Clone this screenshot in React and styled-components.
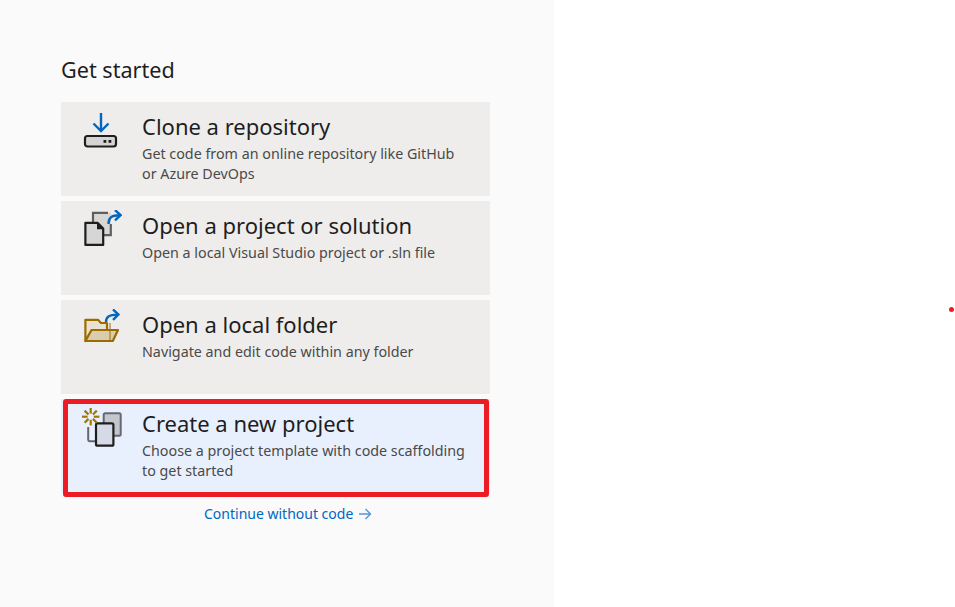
import React from "react";
import styled, { createGlobalStyle } from "styled-components";

const Global = createGlobalStyle`
   html, body {
      margin: 0;
      padding: 0;
      background: #ffffff;
      font-family: "Noto Sans", "Open Sans", sans-serif;
   }
`;

const Page = styled.div`
   position: relative;
   width: 955px;
   height: 607px;
   overflow: hidden;
   background: #ffffff;
`;

const Panel = styled.div`
   width: 554px;
   height: 100%;
   box-sizing: border-box;
   background: #fafafa;
   padding: 54px 64px 0 61px;
`;

const Title = styled.h1`
   margin: 0 0 17px;
   font-size: 21.6px;
   line-height: 31px;
   font-weight: 400;
   color: #1e1e1e;
`;

const List = styled.div`
   display: flex;
   flex-direction: column;
   gap: 5px;
   width: 429px;
`;

const Card = styled.div`
   position: relative;
   display: flex;
   height: 94px;
   box-sizing: border-box;
   padding: 9px 0 0 21px;
   background: ${(p) => (p.$active ? "#e8f0fe" : "#eeedeb")};
`;

/* the hand-drawn red annotation around the last card */
const Marker = styled.div`
   position: absolute;
   inset: 0 1px -4px 2px;
   border: 5px solid #ed1c24;
   border-radius: 3px;
   pointer-events: none;
`;

const IconBox = styled.div`
   flex: none;
   width: 40px;
   height: 40px;
   margin-right: 20px;
   svg {
      display: block;
   }
`;

const Body = styled.div`
   display: flex;
   flex-direction: column;
   margin-top: -1px;
`;

const CardTitle = styled.div`
   font-size: 22px;
   line-height: 32px;
   color: #1e1e1e;
`;

const CardText = styled.div`
   width: 326px;
   margin-top: 2px;
   font-size: 14.3px;
   line-height: 19.5px;
   color: #4a4a4a;
`;

const Continue = styled.a`
   display: flex;
   align-items: center;
   gap: 5px;
   margin-top: 10px;
   padding-left: 143px;
   font-size: 14px;
   line-height: 22px;
   color: #0067c0;
   text-decoration: none;
   cursor: pointer;
`;

const Dot = styled.span`
   position: absolute;
   left: 949px;
   top: 307px;
   width: 5px;
   height: 5px;
   border-radius: 50%;
   background: #ed1c24;
`;

const CloneIcon = () => (
   <svg width="40" height="40" viewBox="0 0 40 40" fill="none">
      <path d="M19 2V20" stroke="#0067c0" strokeWidth="2.4" />
      <path d="M11.5 12.5L19 20L26.5 12.5" stroke="#0067c0" strokeWidth="2.4" />
      <rect x="3" y="25" width="31" height="10.5" rx="2.5" fill="#d4d4d4" stroke="#1e1e1e" strokeWidth="2.2" />
      <rect x="21.5" y="29" width="2.8" height="2.8" fill="#1e1e1e" />
      <rect x="26.5" y="29" width="2.8" height="2.8" fill="#1e1e1e" />
   </svg>
);

const OpenIcon = () => (
   <svg width="40" height="40" viewBox="0 0 40 40" fill="none">
      <rect x="11" y="2.5" width="18" height="23" fill="#bdbdbd" opacity="0.45" />
      <path d="M11 12V2.8H26" stroke="#5f5f5f" strokeWidth="2.2" />
      <path d="M28.8 14V25.2H18" stroke="#5f5f5f" strokeWidth="2.2" />
      <path d="M3.4 12.8H15.5L21.2 18.5V34.9H3.4Z" fill="#d6d6d6" stroke="#1e1e1e" strokeWidth="2.2" strokeLinejoin="round" />
      <path d="M15 12.8H16L21.2 18V19.2H15Z" fill="#1e1e1e" />
      <path d="M26.5 14C26.5 8 29 5.2 38 5.2" stroke="#0067c0" strokeWidth="2.4" />
      <path d="M33 0L38.6 5.2L33 10.4" stroke="#0067c0" strokeWidth="2.4" />
   </svg>
);

const FolderIcon = () => (
   <svg width="40" height="40" viewBox="0 0 40 40" fill="none">
      <path d="M3.4 32V10.8H16L19 14H25V21H10L3.4 32Z" fill="#e9e2d2" stroke="#9c6c00" strokeWidth="2.2" strokeLinejoin="round" />
      <path d="M9.5 21H36L30.8 32H3.4Z" fill="#d9ccb0" stroke="#9c6c00" strokeWidth="2.2" strokeLinejoin="round" />
      <path d="M28 14V32" stroke="#9c6c00" strokeWidth="1.8" opacity="0.55" />
      <path d="M24 13C24 8 26.5 5.6 36 5.6" stroke="#0067c0" strokeWidth="2.4" />
      <path d="M31 0.4L36.4 5.6L31 10.8" stroke="#0067c0" strokeWidth="2.4" />
   </svg>
);

const NewIcon = () => (
   <svg width="40" height="40" viewBox="0 0 40 40" fill="none">
      <rect x="21.7" y="5.3" width="17" height="22.4" rx="1.5" fill="#c3c6cf" stroke="#66686e" strokeWidth="2" />
      <path d="M13 33.2H7.5C6.6 33.2 6.2 32.6 6.2 31.8V19" stroke="#66686e" strokeWidth="2" />
      <rect x="14" y="15.3" width="17.4" height="22.4" rx="1.5" fill="#d6dae6" stroke="#1e1e1e" strokeWidth="2.2" />
      <g stroke="#a07800" strokeWidth="2.2">
         <path d="M8.7 0V5.6" />
         <path d="M8.7 11.8V17.4" />
         <path d="M0 8.7H5.6" />
         <path d="M11.8 8.7H17.4" />
         <path d="M2.6 2.6L6.5 6.5" />
         <path d="M10.9 10.9L14.8 14.8" />
         <path d="M14.8 2.6L10.9 6.5" />
         <path d="M6.5 10.9L2.6 14.8" />
      </g>
   </svg>
);

const cards = [
   {
      title: "Clone a repository",
      text: "Get code from an online repository like GitHub or Azure DevOps",
      icon: <CloneIcon />,
   },
   {
      title: "Open a project or solution",
      text: "Open a local Visual Studio project or .sln file",
      icon: <OpenIcon />,
   },
   {
      title: "Open a local folder",
      text: "Navigate and edit code within any folder",
      icon: <FolderIcon />,
   },
   {
      title: "Create a new project",
      text: "Choose a project template with code scaffolding to get started",
      icon: <NewIcon />,
      active: true,
   },
];

const App = () => {
   return (
      <Page>
         <Global />
         <Panel>
            <Title>Get started</Title>
            <List>
               {cards.map((card) => (
                  <Card key={card.title} $active={card.active}>
                     <IconBox>{card.icon}</IconBox>
                     <Body>
                        <CardTitle>{card.title}</CardTitle>
                        <CardText>{card.text}</CardText>
                     </Body>
                     {card.active && <Marker />}
                  </Card>
               ))}
            </List>
            <Continue>
               Continue without code
               <svg width="14" height="12" viewBox="0 0 14 12" fill="none">
                  <path d="M1 6H12.5M7.5 1L12.5 6L7.5 11" stroke="#5b93d6" strokeWidth="1.4" />
               </svg>
            </Continue>
         </Panel>
         <Dot />
      </Page>
   );
};

export default App;
